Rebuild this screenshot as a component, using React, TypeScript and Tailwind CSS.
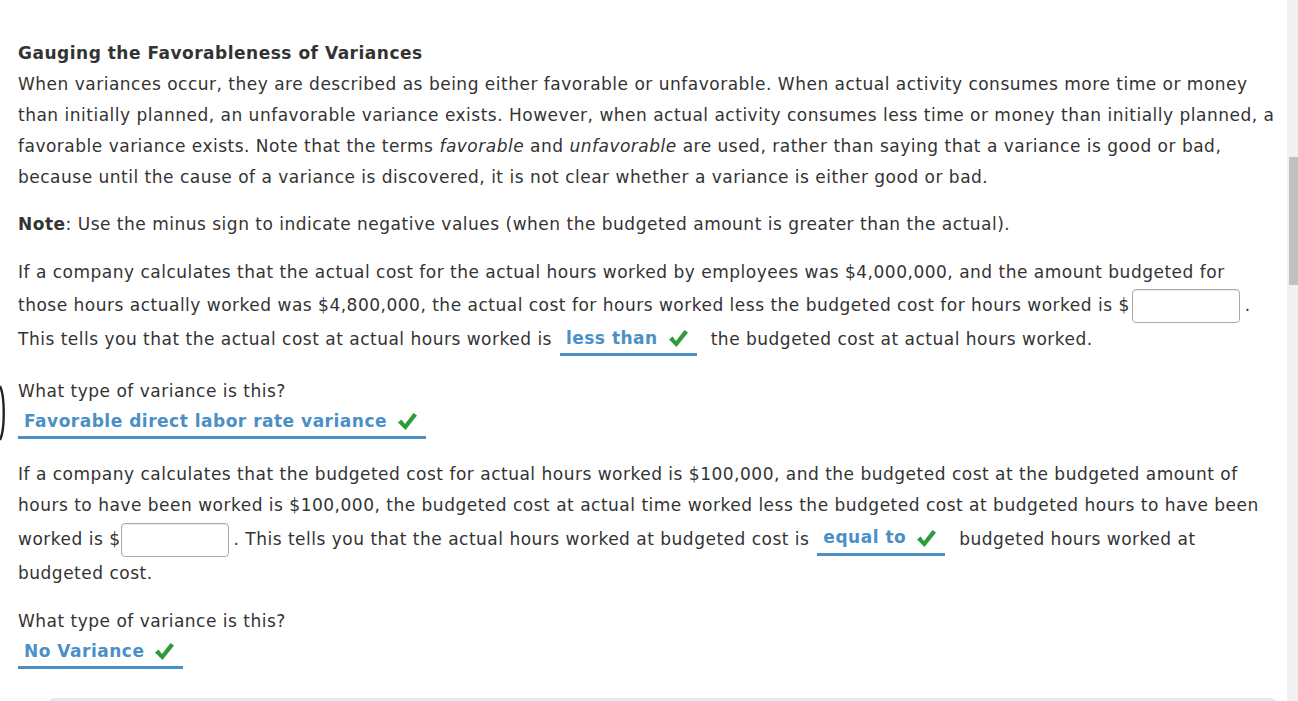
import React from 'react';

const font = { fontFamily: '"DejaVu Sans", Verdana, sans-serif', letterSpacing: '0.5px' };

const Check = () => (
    <svg width="21" height="19" viewBox="0 0 21 19" className="ml-[10px] shrink-0">
        <path d="M1 10.5 L4.5 7.5 L8 12 L16.5 1 L20 3.5 L8.5 18 Z" fill="#2f9a3c" />
    </svg>
);

const Answer: React.FC<{ text: string; className?: string }> = ({ text, className = '' }) => (
    <span className={`inline-flex items-center h-[32px] border-b-[3px] border-[#4a8fc6] pl-[6px] pr-[8px] font-bold text-[#4a8fc6] ${className}`}>
        {text}
        <Check />
    </span>
);

const Blank: React.FC<{ className?: string }> = ({ className = '' }) => (
    <span className={`inline-block w-[108px] h-[34px] rounded-[4px] border border-[#a9a9a9] bg-white shadow-[inset_0_1px_1px_rgba(0,0,0,0.08)] ${className}`} />
);

const Line: React.FC<{ children: React.ReactNode; className?: string }> = ({ children, className = 'h-[31px]' }) => (
    <div className={`flex items-center whitespace-pre ${className}`}>{children}</div>
);

export default function App() {
    return (
        <div className="flex w-[1298px] h-[701px] overflow-hidden bg-white text-[#333333] text-[17px]" style={font}>
            <div className="relative flex-1 pl-[18px] pt-[38px]">
                {/* clipped radio edge on the left */}
                <svg className="absolute left-0 top-[384px]" width="6" height="58" viewBox="0 0 6 58">
                    <path d="M0 2 C5 12 5 46 0 56" stroke="#222" strokeWidth="2.4" fill="none" />
                </svg>

                <Line><span className="font-bold">Gauging the Favorableness of Variances</span></Line>
                <Line>When variances occur, they are described as being either favorable or unfavorable. When actual activity consumes more time or money</Line>
                <Line>than initially planned, an unfavorable variance exists. However, when actual activity consumes less time or money than initially planned, a</Line>
                <Line>favorable variance exists. Note that the terms <i>favorable</i> and <i>unfavorable</i> are used, rather than saying that a variance is good or bad,</Line>
                <Line>because until the cause of a variance is discovered, it is not clear whether a variance is either good or bad.</Line>

                <Line className="h-[31px] mt-[16px]"><span className="font-bold">Note</span>: Use the minus sign to indicate negative values (when the budgeted amount is greater than the actual).</Line>

                <Line className="h-[31px] mt-[17px]">If a company calculates that the actual cost for the actual hours worked by employees was $4,000,000, and the amount budgeted for</Line>
                <Line className="h-[36px]">those hours actually worked was $4,800,000, the actual cost for hours worked less the budgeted cost for hours worked is $<Blank className="ml-[2px]" /> <span className="ml-[5px]">.</span></Line>
                <Line className="h-[32px]">This tells you that the actual cost at actual hours worked is <Answer text="less than" className="ml-[2px] mr-[14px]" />the budgeted cost at actual hours worked.</Line>

                <Line className="h-[31px] mt-[20px]">What type of variance is this?</Line>
                <Line className="h-[32px]"><Answer text="Favorable direct labor rate variance" /></Line>

                <Line className="h-[31px] mt-[20px]">If a company calculates that the budgeted cost for actual hours worked is $100,000, and the budgeted cost at the budgeted amount of</Line>
                <Line className="h-[32px]">hours to have been worked is $100,000, the budgeted cost at actual time worked less the budgeted cost at budgeted hours to have been</Line>
                <Line className="h-[35px]">worked is $<Blank /> <span className="ml-[5px]">. This tells you that the actual hours worked at budgeted cost is </span><Answer text="equal to" className="ml-[2px] mr-[14px]" />budgeted hours worked at</Line>
                <Line className="h-[31px] pt-[3px]">budgeted cost.</Line>

                <Line className="h-[31px] mt-[18px]">What type of variance is this?</Line>
                <Line className="h-[32px]"><Answer text="No Variance" /></Line>

                <div className="ml-[30px] mr-[10px] mt-[29px] h-[40px] rounded-t-[6px] bg-[#e3e9ed]" />
            </div>

            <div className="w-[11px] bg-[#f1f1f1] pt-[157px]">
                <div className="ml-[2px] w-[9px] h-[128px] bg-[#c1c1c1]" />
            </div>
        </div>
    );
}
